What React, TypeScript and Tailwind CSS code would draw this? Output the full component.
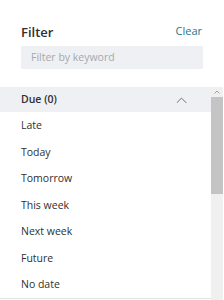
const dueOptions = ["Late", "Today", "Tomorrow", "This week", "Next week", "Future", "No date"];

function ChevronUp({ className }: { className?: string }) {
  return (
    <svg className={className} viewBox="0 0 12 7" fill="none" stroke="currentColor" strokeWidth="1" strokeLinecap="round">
      <path d="M1 6.2 6 1.2l5 5" />
    </svg>
  );
}

function FakeScrollbar() {
  return (
    <div className="flex w-[13px] shrink-0">
      <div className="flex w-[12px] flex-col bg-[#f0f0f0]">
        <div className="flex h-[10px] items-center justify-center text-[#a3a3a3]">
          <svg className="w-[6px]" viewBox="0 0 6 4" fill="none" stroke="currentColor" strokeWidth="1">
            <path d="M0.5 3.5 3 1l2.5 2.5" />
          </svg>
        </div>
        <div className="h-[97px] bg-[#c4c4c4]" />
      </div>
      <div className="w-px bg-white" />
    </div>
  );
}

export default function App() {
  return (
    <div className="flex h-[300px] w-[224px] flex-col overflow-hidden bg-white font-['Open_Sans',sans-serif] text-[#2f2f2f]">
      <div className="px-[21px] pt-[23px]">
        <div className="flex items-start justify-between">
          <h2 className="text-[13px] font-semibold leading-[18px]">Filter</h2>
          <button className="pr-px pt-px text-[11px] leading-[14px] text-[#2a7389]">Clear</button>
        </div>
        <div className="mt-[5px] flex h-[23px] items-center bg-[#eef0f3] pl-[10px]">
          <input
            className="w-full bg-transparent text-[10.5px] text-[#333333] outline-none placeholder:text-[#a6a9ad]"
            placeholder="Filter by keyword"
          />
        </div>
      </div>

      <div className="mt-[18px] flex min-h-0 flex-1">
        <div className="flex-1">
          <div className="flex h-[25px] items-center justify-between bg-[#eef0f3] pl-[21px] pr-[24px] pt-px">
            <span className="text-[10.5px] font-semibold">Due (0)</span>
            <ChevronUp className="w-[11px] text-[#666666]" />
          </div>
          {dueOptions.map((label) => (
            <div key={label} className="flex h-[26.5px] items-center pl-[21px] pt-[2px] text-[10.5px] font-medium">
              {label}
            </div>
          ))}
          <div className="h-px bg-[#e6e6e6]" />
        </div>
        <FakeScrollbar />
      </div>
    </div>
  );
}
